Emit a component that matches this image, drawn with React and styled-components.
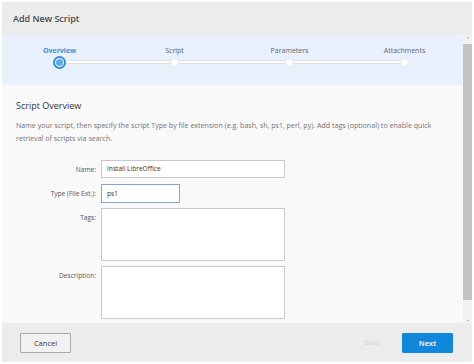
import React from 'react';
import styled, { createGlobalStyle } from 'styled-components';

const GlobalStyle = createGlobalStyle`
  html, body {
    margin: 0;
    padding: 0;
    background: #ffffff;
  }
  body {
    font-family: 'Open Sans', 'Noto Sans', sans-serif;
    color: #444;
  }
  * {
    box-sizing: border-box;
  }
`;

const Dialog = styled.div`
  width: 470px;
  height: 360px;
  margin: 2px;
  display: flex;
  flex-direction: column;
  background: #f9f9f9;
`;

const Header = styled.div`
  height: 32px;
  flex-shrink: 0;
  background: #ececec;
  display: flex;
  align-items: center;
  padding-left: 11px;
`;

const Title = styled.h1`
  margin: 0;
  font-size: 9px;
  font-weight: 600;
  color: #4a4a4a;
`;

const Body = styled.div`
  flex: 1;
  display: flex;
  min-height: 0;
`;

const Scroller = styled.div`
  flex: 1;
  overflow: hidden;
  background: #f9f9f9;
`;

const StepBand = styled.div`
  height: 51px;
  background: #e7f0fb;
  padding-top: 12px;
`;

const Steps = styled.div`
  position: relative;
  display: grid;
  grid-template-columns: repeat(4, 115px);
`;

const Track = styled.div`
  position: absolute;
  left: 58px;
  width: 345px;
  top: 14px;
  height: 4px;
  background: #ffffff;
  border: 1px solid #dde1e6;
  border-radius: 2px;
`;

const Step = styled.div`
  display: flex;
  flex-direction: column;
  align-items: center;
  position: relative;
`;

const StepLabel = styled.span`
  font-size: 7px;
  line-height: 10px;
  font-weight: ${({ $active }) => ($active ? 700 : 400)};
  color: ${({ $active }) => ($active ? '#3b8fd9' : '#666')};
`;

const DotSlot = styled.div`
  height: 12px;
  display: flex;
  align-items: center;
  justify-content: center;
`;

const Dot = styled.div`
  width: 9px;
  height: 9px;
  border-radius: 50%;
  background: #ffffff;
  border: 1px solid #e2e4e8;
`;

const ActiveDot = styled.div`
  width: 13px;
  height: 13px;
  border-radius: 50%;
  border: 2px solid #2f8ee0;
  background: #ffffff;
  display: flex;
  align-items: center;
  justify-content: center;

  &::after {
    content: '';
    width: 7px;
    height: 7px;
    border-radius: 50%;
    background: #5aa8ee;
  }
`;

const Section = styled.div`
  padding: 14px 14px 0;
`;

const SectionTitle = styled.h2`
  margin: 0;
  font-size: 9px;
  line-height: 14px;
  font-weight: 400;
  color: #333;
`;

const Intro = styled.p`
  margin: 6px 0 0;
  font-size: 7.1px;
  line-height: 13px;
  color: #737373;
  max-width: 440px;
`;

const Form = styled.div`
  margin-top: 15px;
  display: grid;
  grid-template-columns: 80px 184px;
  column-gap: 5px;
  row-gap: 5px;
  align-items: start;
`;

const Label = styled.label`
  font-size: 6.6px;
  color: #555;
  text-align: right;
  line-height: ${({ $top }) => ($top ? '12px' : '19px')};
  padding-top: ${({ $top }) => ($top ? '4px' : '0')};
`;

const Input = styled.div`
  height: ${({ $h }) => $h || 18}px;
  width: ${({ $w }) => $w || 184}px;
  background: #ffffff;
  border: 1px solid ${({ $focus }) => ($focus ? '#7ea9d3' : '#c9c9c9')};
  font-size: 6.6px;
  line-height: ${({ $h }) => ($h && $h < 30 ? $h - 2 : 16)}px;
  padding-left: 5px;
  color: #333;
`;

const ScrollBar = styled.div`
  width: 9px;
  flex-shrink: 0;
  background: #f1f1f1;
  display: flex;
  flex-direction: column;
  align-items: center;
  justify-content: space-between;
  padding: 2px 0 1px;
`;

const Arrow = styled.span`
  font-size: 5px;
  line-height: 6px;
  color: #777;
`;

const Thumb = styled.div`
  width: 9px;
  flex: 1;
  margin: 2px 0 16px;
  background: #c2c2c2;
`;

const Footer = styled.div`
  height: 39px;
  flex-shrink: 0;
  background: #ececec;
  display: flex;
  align-items: center;
  padding: 0 19px 0 18px;
`;

const Button = styled.button`
  height: 20px;
  width: 51px;
  font-family: inherit;
  font-size: 7.5px;
  padding: 0;
  cursor: pointer;
  border-radius: 1px;
  border: 1px solid ${({ $primary }) => ($primary ? '#1187dc' : '#a9a9a9')};
  background: ${({ $primary }) => ($primary ? '#1187dc' : '#f2f2f2')};
  color: ${({ $primary }) => ($primary ? '#ffffff' : '#3a3a3a')};
  font-weight: ${({ $primary }) => ($primary ? 600 : 400)};
`;

const BackLink = styled.span`
  margin-left: auto;
  margin-right: 22px;
  font-size: 7px;
  color: #d2d2d2;
`;

const steps = ['Overview', 'Script', 'Parameters', 'Attachments'];

export default function App() {
  return (
    <>
      <GlobalStyle />
      <Dialog>
        <Header>
          <Title>Add New Script</Title>
        </Header>
        <Body>
          <Scroller>
            <StepBand>
              <Steps>
                <Track />
                {steps.map((s, i) => (
                  <Step key={s}>
                    <StepLabel $active={i === 0}>{s}</StepLabel>
                    <DotSlot>{i === 0 ? <ActiveDot /> : <Dot />}</DotSlot>
                  </Step>
                ))}
              </Steps>
            </StepBand>
            <Section>
              <SectionTitle>Script Overview</SectionTitle>
              <Intro>
                Name your script, then specify the script Type by file extension (e.g. bash, sh, ps1, perl, py). Add tags (optional) to enable quick retrieval of scripts via search.
              </Intro>
              <Form>
                <Label>Name:</Label>
                <Input>Install LibreOffice</Input>
                <Label>Type (File Ext.):</Label>
                <Input $focus $w={79} $h={19}>ps1</Input>
                <Label $top>Tags:</Label>
                <Input $h={53} />
                <Label $top>Description:</Label>
                <Input $h={53} />
              </Form>
            </Section>
          </Scroller>
          <ScrollBar>
            <Arrow>&#8963;</Arrow>
            <Thumb />
            <Arrow>&#8964;</Arrow>
          </ScrollBar>
        </Body>
        <Footer>
          <Button>Cancel</Button>
          <BackLink>Back</BackLink>
          <Button $primary>Next</Button>
        </Footer>
      </Dialog>
    </>
  );
}
